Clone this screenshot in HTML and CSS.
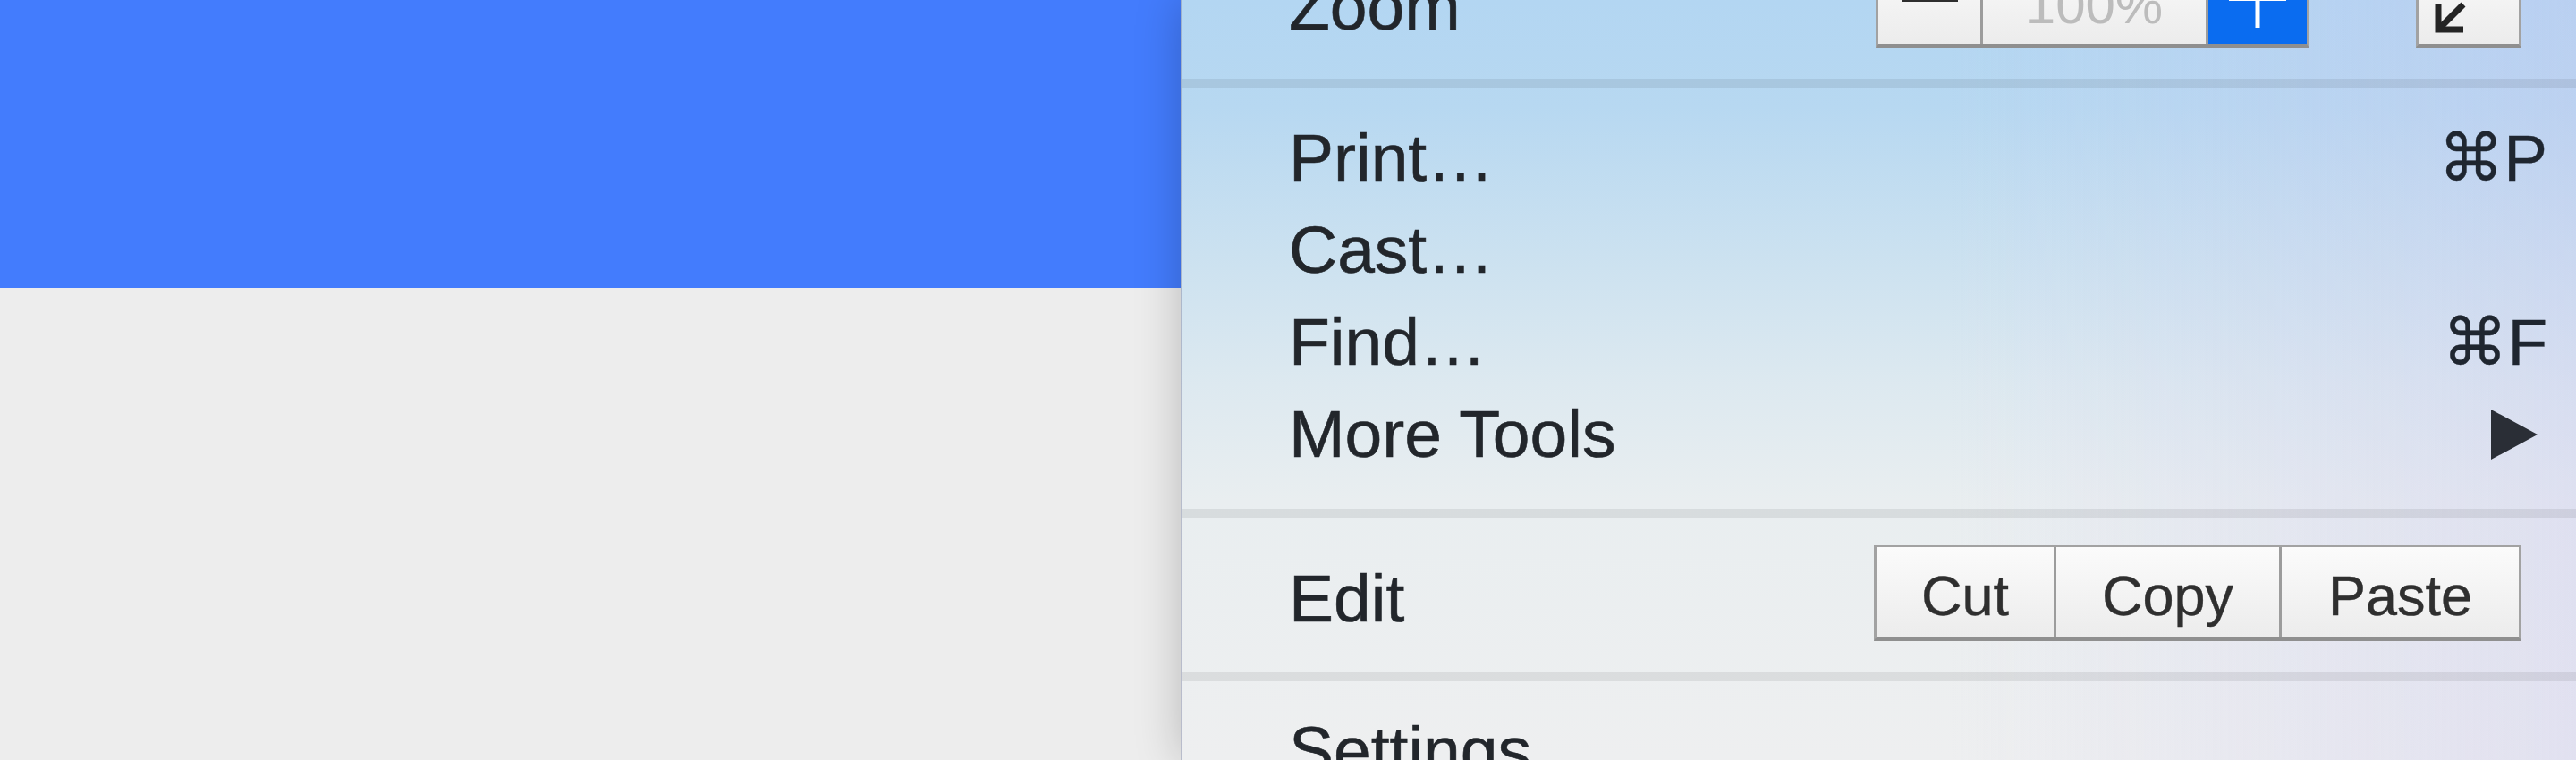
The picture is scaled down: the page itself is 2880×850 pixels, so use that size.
FILE: index.html
```html
<!DOCTYPE html>
<html lang="en">
<head>
<meta charset="utf-8">
<title>Menu</title>
<link rel="stylesheet" href="styles.css">
</head>
<body>
<div class="page">
  <div class="content">
    <div class="toolbar"></div>
    <div class="canvas"></div>
  </div>
  <div class="menu">
    <div class="row group-row zoom-row">
      <span class="label">Zoom</span>
      <div class="controls">
        <div class="seg zoom-seg">
          <div class="seg-btn minus-btn"><span class="minus-bar"></span></div>
          <div class="seg-btn pct-btn"><span class="pct">100%</span></div>
          <div class="seg-btn plus-btn">
            <svg class="plus-icon" width="64" height="64" viewBox="0 0 64 64"><rect x="0" y="29" width="64" height="5" fill="#ffffff"/><rect x="29.5" y="0" width="5" height="64" fill="#ffffff"/></svg>
          </div>
        </div>
        <div class="fs-btn">
          <svg class="fs-icon" width="112" height="100" viewBox="0 0 112 100">
            <g fill="none" stroke="#242424" stroke-width="7" stroke-linecap="butt" stroke-linejoin="miter">
              <polyline points="22,56 22,84 50,84"/>
              <line x1="23" y1="83" x2="50" y2="56"/>
              <polyline points="62,16 90,16 90,44"/>
              <line x1="89" y1="17" x2="62" y2="44"/>
            </g>
          </svg>
        </div>
      </div>
    </div>
    <div class="sep"></div>
    <div class="items first-items">
      <div class="row item"><span class="item-label">Print…</span><span class="shortcut">⌘P</span></div>
      <div class="row item"><span class="item-label">Cast…</span></div>
      <div class="row item"><span class="item-label">Find…</span><span class="shortcut">⌘F</span></div>
      <div class="row item"><span class="item-label">More Tools</span>
        <svg class="submenu-arrow" width="52" height="56" viewBox="0 0 52 56"><polygon points="0,0 52,28 0,56" fill="#2a2e36"/></svg>
      </div>
    </div>
    <div class="sep"></div>
    <div class="row group-row edit-row">
      <span class="label">Edit</span>
      <div class="seg edit-seg">
        <div class="seg-btn cut-btn"><span class="btn-text">Cut</span></div>
        <div class="seg-btn copy-btn"><span class="btn-text">Copy</span></div>
        <div class="seg-btn paste-btn"><span class="btn-text">Paste</span></div>
      </div>
    </div>
    <div class="sep"></div>
    <div class="items last-items">
      <div class="row item"><span class="item-label">Settings</span></div>
    </div>
  </div>
</div>
</body>
</html>
```

FILE: styles.css
```css
html, body {
  margin: 0;
  padding: 0;
}

body {
  width: 2880px;
  height: 850px;
  overflow: hidden;
  background: #ededed;
  font-family: "Liberation Sans", Arial, "DejaVu Sans", sans-serif;
}

.page {
  display: flex;
  height: 850px;
}

.content {
  width: 1320px;
  flex: none;
  display: flex;
  flex-direction: column;
}

.toolbar {
  height: 322px;
  background: #437cfd;
}

.canvas {
  flex: 1;
  background: #ededed;
}

.menu {
  flex: 1;
  z-index: 1;
  overflow: hidden;
  border-left: 2px solid rgba(110, 120, 135, 0.35);
  box-shadow: 0 0 48px rgba(0, 0, 0, 0.22);
  color: #22262b;
  background:
    linear-gradient(to right, rgba(255, 255, 255, 0) 55%, rgba(200, 196, 240, 0.32) 100%),
    linear-gradient(to bottom, #b3d6f2 0px, #b7d8f1 120px, #cde2f0 300px, #dde9f0 430px, #e9eef0 560px, #eeeff0 850px);
}

.row {
  display: flex;
  align-items: center;
  box-sizing: border-box;
  padding: 0 32px 0 119px;
}

.label,
.item-label {
  font-size: 75px;
  white-space: nowrap;
  -webkit-text-stroke: 0.6px currentColor;
}

.group-row .label {
  padding-top: 14px;
  line-height: normal;
}

.zoom-row {
  margin-top: -88px;
  height: 176px;
  padding-right: 61px;
}

.edit-row {
  height: 173px;
  padding-right: 61px;
  padding-bottom: 5px;
}

.edit-row .label {
  padding-top: 12px;
}

.controls {
  margin-left: auto;
  display: flex;
  align-items: center;
  gap: 119px;
}

.sep {
  height: 10px;
  background: rgba(0, 0, 0, 0.075);
}

.first-items {
  padding: 27px 0 32px;
}

.last-items {
  padding-top: 26px;
}

.item {
  height: 103px;
  line-height: 103px;
}

.shortcut {
  margin-left: auto;
  font-size: 73px;
  white-space: nowrap;
  color: #1f2630;
  -webkit-text-stroke: 0.4px currentColor;
}

.submenu-arrow {
  margin-left: auto;
  margin-right: 11px;
  display: block;
}

/* segmented button groups */
.seg {
  display: flex;
  height: 108px;
  box-sizing: border-box;
  border: 3px solid #a2a2a2;
  border-bottom: 5px solid #8f8f8f;
  background: linear-gradient(to bottom, #fbfbfb, #ececec);
}

.edit-seg {
  margin-left: auto;
}

.seg-btn {
  display: flex;
  align-items: center;
  justify-content: center;
  box-sizing: border-box;
}

.seg-btn + .seg-btn {
  border-left: 3px solid #9c9c9c;
}

.minus-btn { width: 114px; }
.pct-btn { width: 252px; }
.plus-btn { width: 113px; background: #0a6cf0; }

.cut-btn { width: 198px; }
.copy-btn { width: 252px; }
.paste-btn { width: 268px; }

.minus-bar {
  display: block;
  width: 63px;
  height: 5px;
  background: #2e2e2e;
}

.pct {
  font-size: 60px;
  color: #bcbcbc;
  padding-top: 12px;
}

.plus-icon {
  display: block;
}

.btn-text {
  font-size: 63px;
  color: #2f2f2f;
  padding-top: 7px;
  -webkit-text-stroke: 0.4px currentColor;
}

.fs-btn {
  width: 118px;
  height: 108px;
  box-sizing: border-box;
  border: 3px solid #a2a2a2;
  border-bottom: 5px solid #8f8f8f;
  background: linear-gradient(to bottom, #fbfbfb, #ececec);
}

.fs-icon {
  display: block;
}
```
